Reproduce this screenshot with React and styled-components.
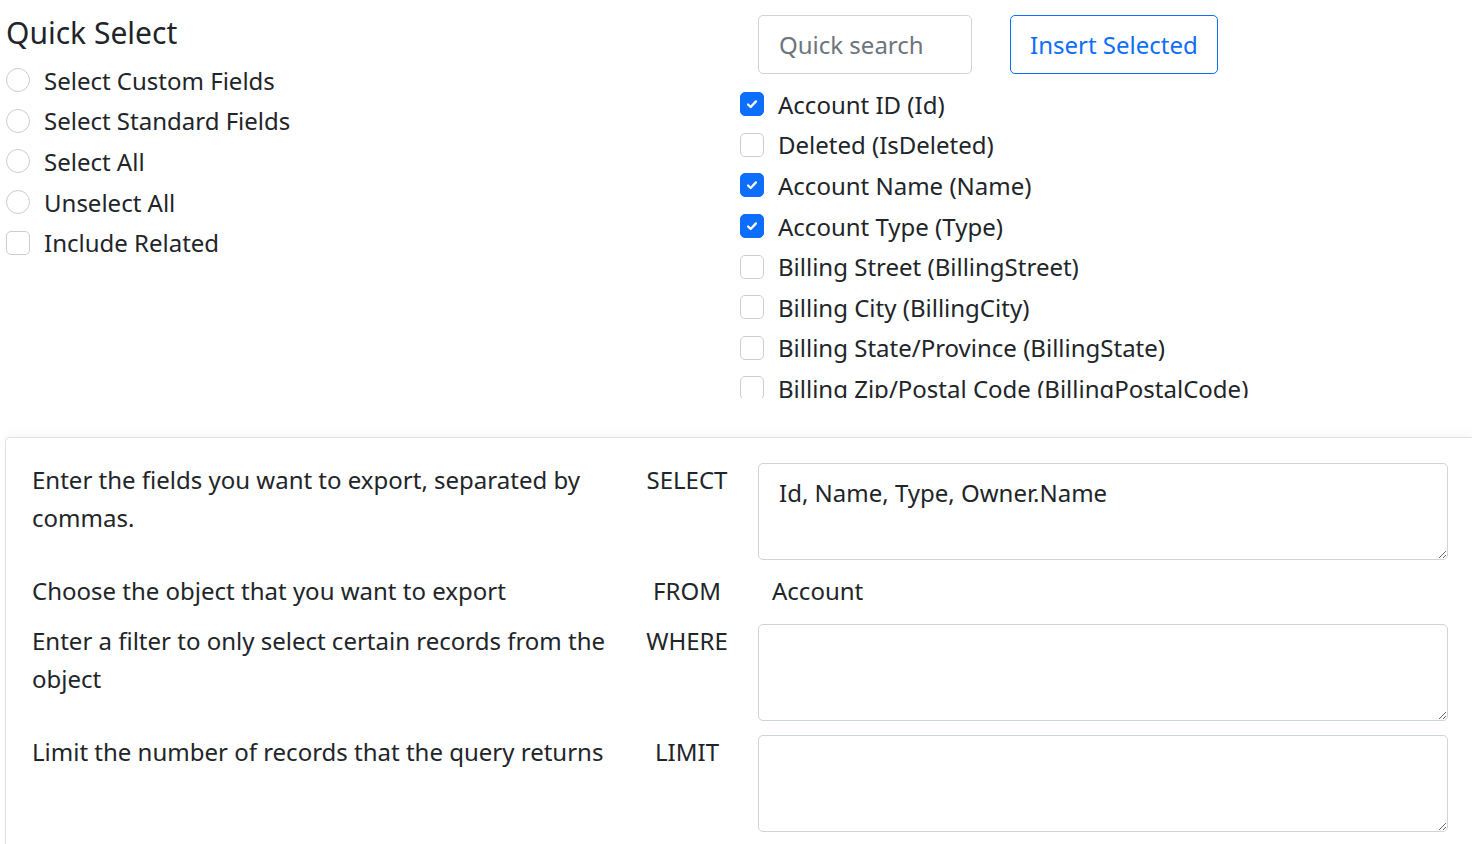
import React from 'react';
import styled, { createGlobalStyle } from 'styled-components';

const Global = createGlobalStyle`
  body { margin: 0; background: #fff; font-family: 'Noto Sans', sans-serif; color: #212529; font-size: 24px; }
`;

const fields = [
  ['Account ID (Id)', true],
  ['Deleted (IsDeleted)', false],
  ['Account Name (Name)', true],
  ['Account Type (Type)', true],
  ['Billing Street (BillingStreet)', false],
  ['Billing City (BillingCity)', false],
  ['Billing State/Province (BillingState)', false],
  ['Billing Zip/Postal Code (BillingPostalCode)', false],
];

const Check = ({ on, round }) => (
  <Box $on={on} $round={round}>
    {on && (
      <svg width="14" height="14" viewBox="0 0 16 16">
        <path d="M3.5 8.5l3 3 6-6.5" fill="none" stroke="#fff" strokeWidth="2.6" strokeLinecap="round" strokeLinejoin="round" />
      </svg>
    )}
  </Box>
);

const App = () => (
  <>
    <Global />
    <Top>
      <Left>
        <Title>Quick Select</Title>
        <Option><Check round />Select Custom Fields</Option>
        <Option><Check round />Select Standard Fields</Option>
        <Option><Check round />Select All</Option>
        <Option><Check round />Unselect All</Option>
        <Option><Check />Include Related</Option>
      </Left>
      <Right>
        <Toolbar>
          <Search placeholder="Quick search" />
          <OutlineButton>Insert Selected</OutlineButton>
        </Toolbar>
        <FieldList>
          {fields.map(([label, on]) => (
            <Option key={label}><Check on={on} />{label}</Option>
          ))}
        </FieldList>
      </Right>
    </Top>
    <Card>
      <Row>
        <Desc>Enter the fields you want to export, separated by commas.</Desc>
        <Keyword>SELECT</Keyword>
        <Area defaultValue="Id, Name, Type, Owner.Name" />
      </Row>
      <Row>
        <Desc>Choose the object that you want to export</Desc>
        <Keyword>FROM</Keyword>
        <Plain>Account</Plain>
      </Row>
      <Row>
        <Desc>Enter a filter to only select certain records from the object</Desc>
        <Keyword>WHERE</Keyword>
        <Area />
      </Row>
      <Row>
        <Desc>Limit the number of records that the query returns</Desc>
        <Keyword>LIMIT</Keyword>
        <Area />
      </Row>
    </Card>
  </>
);

export default App;

const Top = styled.div`
  display: grid;
  grid-template-columns: 740px 1fr;
  height: 437px;
`;

const Left = styled.div`
  padding: 12px 0 0 6px;
`;

const Title = styled.h2`
  margin: 0 0 6px;
  font-size: 30px;
  font-weight: 400;
  line-height: 42px;
`;

const Option = styled.label`
  display: flex;
  align-items: center;
  gap: 14px;
  height: 40.6px;
  white-space: nowrap;
`;

const Box = styled.span`
  width: 24px;
  height: 24px;
  box-sizing: border-box;
  flex: none;
  border: 1px solid ${p => (p.$on ? '#0d6efd' : '#c9cdd2')};
  background: ${p => (p.$on ? '#0d6efd' : '#fff')};
  border-radius: ${p => (p.$round ? '50%' : '5px')};
  display: flex;
  align-items: center;
  justify-content: center;
`;

const Right = styled.div`
  display: flex;
  flex-direction: column;
`;

const Toolbar = styled.div`
  display: flex;
  gap: 38px;
  padding: 15px 0 0 18px;
  margin-bottom: 10px;
`;

const Search = styled.input`
  width: 214px;
  height: 59px;
  box-sizing: border-box;
  border: 1px solid #ced4da;
  border-radius: 5px;
  padding: 0 20px;
  font: inherit;
  &::placeholder { color: #6c757d; }
`;

const OutlineButton = styled.button`
  height: 59px;
  padding: 0 19px;
  border: 1px solid #0d6efd;
  border-radius: 5px;
  background: #fff;
  color: #0d6efd;
  font: inherit;
`;

const FieldList = styled.div`
  height: 314px;
  overflow: hidden;
`;

const Card = styled.div`
  margin-left: 5px;
  border: 1px solid #dee2e6;
  border-right: none;
  border-radius: 5px 0 0 0;
  box-shadow: 0 -4px 8px rgba(0, 0, 0, 0.03);
  padding: 25px 24px 14px 26px;
`;

const Row = styled.div`
  display: grid;
  grid-template-columns: 584px 142px 1fr;
  align-items: start;
  margin-bottom: 14px;
  line-height: 38px;
`;

const Desc = styled.div`
  margin-top: -2px;
  padding-right: 10px;
`;

const Keyword = styled.div`
  margin-top: -2px;
  text-align: center;
`;

const Area = styled.textarea`
  height: 97px;
  box-sizing: border-box;
  border: 1px solid #ced4da;
  border-radius: 5px;
  padding: 10px 20px;
  font: inherit;
  color: #212529;
`;

const Plain = styled.div`
  margin-top: -2px;
  padding: 0 14px;
`;
